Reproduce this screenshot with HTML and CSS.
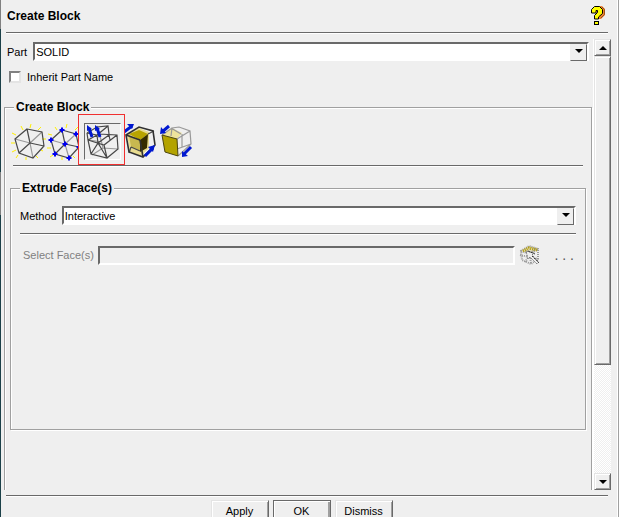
FILE: index.html
```html
<!DOCTYPE html>
<html lang="en">
<head>
    <meta charset="UTF-8">
    <meta name="viewport" content="width=device-width, initial-scale=1.0">
    <title>Create Block</title>
    <link rel="stylesheet" href="styles.css">
</head>
<body>

    <header class="title-bar">
        <h1>Create Block</h1>
        <button class="icon-button" aria-label="Help">
            <svg width="14" height="19" viewBox="0 0 14 19">
                <path d="M4 0h7l3 3v6l-4 4H7z" fill="#e88030"/>
                <path d="M.5 3.500l3-3h5l3 3v4l-4 3.500v2h-4v-3.500l3-3V4.500H5v2.500H.5z" fill="#ffff00" stroke="#000"/>
                <path d="M11 1l2.500 2.500v5L10 12" fill="none" stroke="#a05018"/>
                <rect x="3.500" y="15.500" width="4" height="3" fill="#ffff00" stroke="#000"/>
            </svg>
        </button>
    </header>

    <main class="main-area">
        <form class="content" id="block-form">
            <div class="row part-row">
                <label for="part">Part</label>
                <div class="combo">
                    <select id="part"><option>SOLID</option></select>
                </div>
            </div>

            <div class="row check-row">
                <input type="checkbox" id="inherit">
                <label for="inherit">Inherit Part Name</label>
            </div>

            <fieldset class="group outer">
                <legend>Create Block</legend>

                <div class="toolbar">
                    <button type="button" class="tool" aria-label="From vertices">
                        <svg width="36" height="38" viewBox="0 0 36 38">
                            <path class="glow" d="M11 3l2 4M21 1l-1 4M31 4l-3 3M2 10l4 2M1 20h4M2 29l4-2M6 35l2-3M16 37v-3M28 35l-2-2M33 28l-2-1M36 16h-4"/>
                            <path class="wire light" d="M20 20L5 16M20 20l3 15M20 20L32 9"/>
                            <path class="wire" d="M17 6l15 3 2 14-11 12-14-5L5 16zM20 20L17 6M20 20l14 3M20 20L9 30"/>
                        </svg>
                    </button>
                    <button type="button" class="tool" aria-label="From points">
                        <svg width="36" height="38" viewBox="0 0 36 38">
                            <path class="glow" d="M8 4l2 3M20 1l-1 4M31 4l-3 3M1 11l4 1M0 25h4M3 34l3-2M15 37v-3M28 35l-2-2M35 30l-3-1"/>
                            <path class="wire light" d="M18 21L4 17M18 21l4 14M18 21l11-10"/>
                            <path class="wire" d="M15 7l14 4 3 13-10 11-14-4L4 17zM18 21L15 7M18 21l14 3M18 21L8 31"/>
                            <path class="points" d="M12.500 7h5M15 4.500v5M26.500 11h5M29 8.500v5M29.500 24h5M32 21.500v5M19.500 35h5M22 32.500v5M5.500 31h5M8 28.500v5M1.500 17h5M4 14.500v5M15.500 21h5M18 18.500v5"/>
                        </svg>
                    </button>
                    <button type="button" class="tool selected" aria-label="Extrude faces" aria-pressed="true">
                        <svg width="35" height="35" viewBox="0 0 35 35">
                            <path class="wire light" d="M15 12l3 12 15 1M18 24L7 31M4 16l13 2M12 2l2 7"/>
                            <path class="wire" d="M3 16l11-6 18 1 1 14-11 9-16-4zM3 16l16 5L32 11M19 21l3 13M2 9l10-6 11-1 1 8M2 9l1 7M2 9l10 2 11-9M12 11l1 8L6 30M13 19l11-8M24 11l1 5M13 19l9 15"/>
                            <path class="arrow" d="M7 13L4 4M15 13L12 4"/>
                            <path class="arrow-head" d="M2 7V1l5 4zM10 7V1l5 4z"/>
                        </svg>
                    </button>
                    <button type="button" class="tool wide" aria-label="Extrude inner">
                        <svg width="36" height="38" viewBox="0 0 36 38">
                            <path fill="#e8dc90" d="M5 12l3 17 11 4 8-8V9L17 5z"/>
                            <path fill="#b8a400" d="M7 11l10-4 9 4-8 6z"/>
                            <path fill="#c8b850" d="M7 12l11 5v11L9 24z"/>
                            <path fill="#362d00" d="M18 17l8-6-1 14-7 4z"/>
                            <path class="wire" d="M9 24l9 4M9 24l-2 6M26 11l6-3"/>
                            <path class="wire heavy" d="M4 12l13-8 14 4 2 14-12 12-14-5zM4 12l14 5M18 17l3 17"/>
                            <path class="arrow" d="M2 9l8-6M23 33l8-8"/>
                            <path class="arrow-head" d="M5 1h7l-2 5zM26 24l7-2-2 7z"/>
                        </svg>
                    </button>
                    <button type="button" class="tool wide" aria-label="Extrude outer">
                        <svg width="36" height="38" viewBox="0 0 36 38">
                            <path fill="#eee49c" d="M2 12l10-7 10 5-5 6z"/>
                            <path class="wire light" d="M2 12l10-7 7-1 11 4 1 13-13 12M17 16L30 8M12 5l-1 8M11 5l10 6M17 26l14-5M22 11v13"/>
                            <path fill="#b3a300" stroke="#4b4410" d="M2 12l15 4 1 17-13-4z"/>
                            <path class="arrow" d="M9 3L2 9M31 24l-7 7"/>
                            <path class="arrow-head" d="M1 4L0 11l6-1zM22 28v6l6-1z"/>
                        </svg>
                    </button>
                </div>

                <hr>

                <fieldset class="group inner">
                    <legend>Extrude Face(s)</legend>
                    <div class="row method-row">
                        <label for="method">Method</label>
                        <div class="combo">
                            <select id="method"><option>Interactive</option></select>
                        </div>
                    </div>
                    <hr>
                    <div class="row faces-row">
                        <label for="faces">Select Face(s)</label>
                        <input type="text" id="faces" disabled>
                        <button type="button" class="icon-button" aria-label="Pick faces" disabled>
                            <svg width="22" height="20" viewBox="0 0 22 20">
                                <path fill="#dcd8b8" d="M2 6l7-5 10 2-7 6z"/>
                                <path fill="none" stroke="#999" stroke-dasharray="1 1" stroke-width="2" d="M2 6l8-5 9 3v10l-7 5-9-4zM2 6l9 3 8-5M11 9l1 10M1 10l18 4M6 17l10-14"/>
                                <path fill="none" stroke="#b8a000" stroke-width="3" stroke-dasharray="1 1" d="M4 6l6-3 8 2"/>
                                <path fill="#eee" stroke="#777" stroke-dasharray="2 1" d="M7 6l8 2-2 2 7 7-2 2-7-7-2 2z"/>
                                <path fill="none" stroke="#333" stroke-dasharray="2 1" d="M9 6l7 3M13 11l7 7"/>
                            </svg>
                        </button>
                        <span class="dots">. . .</span>
                    </div>
                </fieldset>
            </fieldset>
        </form>

        <div class="scrollbar">
            <button class="raised" aria-label="Scroll up"><span class="triangle up"></span></button>
            <div class="thumb raised"></div>
            <div class="track"></div>
            <button class="raised" aria-label="Scroll down"><span class="triangle"></span></button>
        </div>
    </main>

    <footer class="actions">
        <button class="raised">Apply</button>
        <button class="raised default" type="submit" form="block-form">OK</button>
        <button class="raised">Dismiss</button>
    </footer>

</body>
</html>
```
FILE: styles.css
```css
* {
    box-sizing: border-box;
}

body {
    font: 11px/14px "Liberation Sans", Arial, sans-serif;
    margin: 0;
    height: 100vh;
    overflow: hidden;
    display: flex;
    flex-direction: column;
    background: #efefef;
    color: #000;
    padding: 0 10px 0 4px;
    /* sliver of the window behind, and the frame on the right */
    background-image:
        linear-gradient(#808080 29px, #1b4048 29px, #1b4048 172px, #808080 172px, #808080 215px, #1b4048 215px),
        linear-gradient(90deg, #fff 1px, #a0a0a0 1px);
    background-size: 1px 100%, 2px 100%;
    background-position: left top, right top;
    background-repeat: no-repeat;
}

button, input, select {
    font: inherit;
    color: inherit;
    margin: 0;
    padding: 0;
    border-radius: 0;
}

hr {
    height: 2px;
    margin: 0;
    border: 0;
    border-top: 1px solid #696969;
    border-bottom: 1px solid #fff;
}

.title-bar {
    flex: none;
    height: 34px;
    margin: 0 1px 0 2px;
    padding: 0 3px 2px 1px;
    display: flex;
    align-items: center;
    justify-content: space-between;
    border-bottom: 1px solid #fff;
    box-shadow: inset 0 -1px #696969;
}

.title-bar h1 {
    margin: 0;
    font-size: 12px;
}

.icon-button {
    border: 0;
    background: none;
    display: flex;
}

.main-area {
    flex: 1;
    min-height: 0;
    display: flex;
    padding: 5px 0;
    margin-right: -2px;
}

.content {
    flex: 1;
    min-width: 0;
    overflow: hidden;
    padding-right: 1px;
}

.row {
    display: flex;
    align-items: center;
}

.part-row {
    margin: 3px 3px 0;
    gap: 6px;
}

.check-row {
    margin: 9px 5px 0;
    gap: 6px;
}

.combo {
    flex: 1;
    position: relative;
}

.combo select,
#faces {
    appearance: none;
    display: block;
    width: 100%;
    height: 19px;
    padding: 0 1px;
    border: 2px solid;
    border-color: #696969 #fff #fff #696969;
    background: #fff;
    outline: 0;
}

.combo::before {
    content: "";
    position: absolute;
    right: 2px;
    top: 2px;
    width: 15px;
    height: 15px;
    background: #efefef;
    border: 1px solid;
    border-color: #efefef #696969 #696969 #efefef;
}

.combo::after {
    content: "";
    position: absolute;
    right: 6px;
    top: 7px;
    border: 4px solid transparent;
    border-top-color: #000;
    border-bottom: 0;
}

#inherit {
    appearance: none;
    width: 12px;
    height: 12px;
    border: 2px solid;
    border-color: #808080 #e4e4e4 #e4e4e4 #808080;
    background: #fff;
}

.group {
    min-width: 0;
    padding: 0;
    margin: 0;
    border: 1px solid #a0a0a0;
    box-shadow: 1px 1px #fff, inset 1px 1px #fff;
}

.group legend {
    font-size: 12px;
    font-weight: bold;
    padding: 0 2px;
    background: #efefef;
}

.outer {
    margin-top: 16px;
    padding: 0 5px;
    height: 100%;
}

.outer > legend {
    margin-left: 4px;
}

.outer > hr {
    margin: 0 3px;
}

.toolbar {
    display: flex;
    align-items: center;
    height: 51px;
}

.tool {
    border: 0;
    background: none;
    width: 37px;
    height: 38px;
    margin-top: 4px;
    display: flex;
    overflow: hidden;
}

.tool.wide {
    width: 38px;
}

.tool svg {
    display: block;
    flex: none;
}

.tool.selected {
    width: 47px;
    height: 51px;
    margin: 0 -3px 0 -6px;
    padding: 8px 4px 4px 5px;
    border: 1px solid #f03030;
    position: relative;
    background: #efefef;
}

.tool.selected svg {
    border: 1px solid;
    border-color: #696969 #fff #fff #696969;
    width: 37px;
    height: 37px;
}

.wire {
    fill: none;
    stroke: #484848;
    stroke-width: 1.2;
}

.wire.light {
    stroke: #999;
}

.wire.heavy {
    stroke: #303030;
    stroke-width: 1.6;
}

.glow {
    fill: none;
    stroke: #fff000;
}

.points {
    fill: none;
    stroke: #0000f0;
    stroke-width: 2;
}

.arrow {
    fill: none;
    stroke: #0018d0;
    stroke-width: 3;
}

.arrow-head {
    fill: #0018d0;
}

.inner {
    margin-top: 14px;
    min-height: 249px;
    padding: 0 9px;
}

.method-row {
    margin-top: 11px;
    gap: 5px;
}

.inner > hr {
    margin: 8px 0 10px;
}

.faces-row {
    padding: 0 2px 0 3px;
    gap: 4px;
    color: #808080;
}

#faces {
    flex: 1;
    width: auto;
    min-width: 0;
    background: #efefef;
}

.dots {
    margin-left: 10px;
    font-size: 14px;
    color: #555;
}

.raised {
    background: #efefef;
    border: 1px solid;
    border-color: #e4e4e4 #696969 #696969 #e4e4e4;
    box-shadow: inset 1px 1px #fff, inset -1px -1px #a0a0a0;
}

.scrollbar {
    width: 18px;
    flex: none;
    display: flex;
    flex-direction: column;
    border-left: 1px solid #fff;
}

.scrollbar button {
    height: 17px;
    flex: none;
    display: flex;
    align-items: center;
    justify-content: center;
}

.thumb {
    flex: 308;
}

.track {
    flex: 109;
    background: repeating-conic-gradient(#fff 0 25%, #efefef 0 50%) 0 0 / 2px 2px;
}

.triangle {
    border: 4px solid transparent;
    border-top-color: #000;
    border-bottom: 0;
}

.triangle.up {
    border-top: 0;
    border-bottom: 4px solid #000;
}

.actions {
    flex: none;
    height: 22px;
    margin: 0 1px 0 2px;
    padding: 4px 11px 0 0;
    display: flex;
    justify-content: center;
    gap: 4px;
    border-top: 1px solid #696969;
    box-shadow: inset 0 1px #fff;
}

.actions button {
    width: 58px;
    height: 22px;
    flex: none;
}

.actions .default {
    outline: 1px solid #696969;
    outline-offset: -1px;
    border-color: #696969;
    box-shadow: inset 1px 1px #fff, inset -2px -2px #a0a0a0;
}
```
